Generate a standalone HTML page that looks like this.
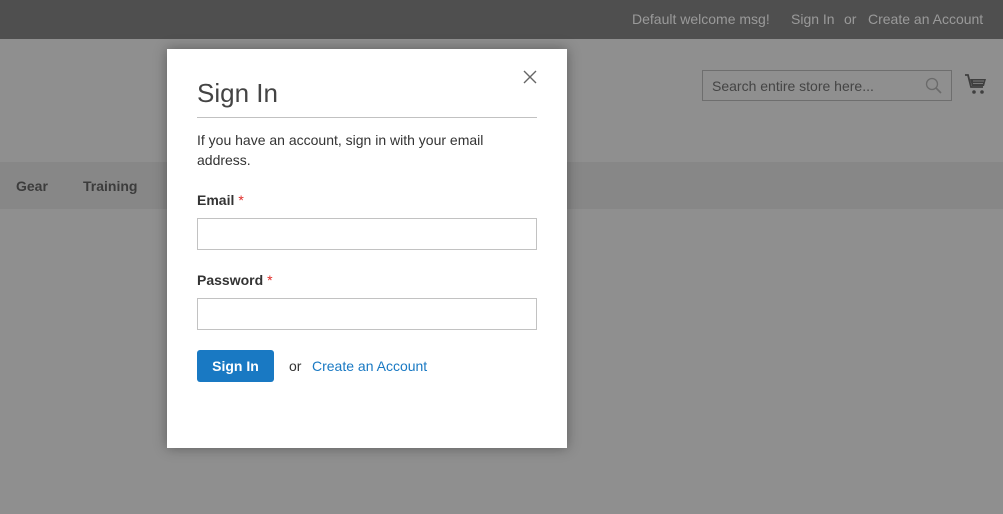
<!DOCTYPE html>
<html><head><style>
*{margin:0;padding:0;box-sizing:border-box}
body{width:1003px;height:514px;overflow:hidden;background:#8f8f8f;font-family:"Liberation Sans",sans-serif;position:relative}
.top{position:absolute;left:0;top:0;width:1003px;height:39px;background:#4f4f4f;color:#9a9a9a;font-size:14px}
.top span{position:absolute;top:11px}
.nav{position:absolute;left:0;top:162px;width:1003px;height:47px;background:#878787}
.nav span{position:absolute;top:16px;font-weight:bold;font-size:14px;color:#3c3c3c}
.search{position:absolute;left:702px;top:70px;width:250px;height:31px;border:1px solid #6e6e6e;background:#8f8f8f;font-size:14px;color:#444;padding:7px 9px}
.modal{position:absolute;left:167px;top:49px;width:400px;height:399px;background:#fff;box-shadow:0 0 12px rgba(0,0,0,.35);color:#333}
.modal h1{position:absolute;left:30px;top:29px;font-weight:normal;font-size:26px;color:#444}
.hr{position:absolute;left:30px;top:68px;width:340px;height:1px;background:#c1c1c1}
.p{position:absolute;left:30px;top:81px;width:330px;font-size:14px;line-height:20px}
.lbl{position:absolute;left:30px;font-weight:bold;font-size:14px}
.lbl b{color:#e02b27;font-weight:normal;margin-left:4px}
.in{position:absolute;left:30px;width:340px;height:32px;border:1px solid #c2c2c2}
.btn{position:absolute;left:30px;top:301px;width:77px;height:32px;background:#1979c3;border-radius:3px;color:#fff;font-weight:bold;font-size:14px;text-align:center;line-height:32px}
</style></head><body>
<div class="top"><span style="left:632px">Default welcome msg!</span><span style="left:791px">Sign In</span><span style="left:844px">or</span><span style="left:868px">Create an Account</span></div>
<div class="search">Search entire store here...</div>
<svg style="position:absolute;left:925px;top:77px" width="18" height="18" viewBox="0 0 18 18"><circle cx="7" cy="7" r="5.5" fill="none" stroke="#6a6a6a" stroke-width="1.3"/><path d="M11 11l5 5" stroke="#6a6a6a" stroke-width="1.6"/></svg>
<svg style="position:absolute;left:964px;top:73px" width="24" height="24" viewBox="0 0 24 24"><path d="M1 2h3l3 12h12" fill="none" stroke="#3f3f3f" stroke-width="1.8"/><path d="M6 6h16l-2 7H8z" fill="#3f3f3f"/><path d="M9 8h11M9 10.5h10" stroke="#8f8f8f" stroke-width=".8"/><circle cx="10" cy="19" r="1.8" fill="#3f3f3f"/><circle cx="18" cy="19" r="1.8" fill="#3f3f3f"/></svg>
<div class="nav"><span style="left:16px">Gear</span><span style="left:83px">Training</span></div>
<div class="modal">
<svg style="position:absolute;left:356px;top:21px" width="14" height="14" viewBox="0 0 14 14"><path d="M1 1l12 12M13 1L1 13" stroke="#666" stroke-width="1.4"/></svg>
<h1>Sign In</h1><div class="hr"></div>
<div class="p">If you have an account, sign in with your email address.</div>
<div class="lbl" style="top:143px">Email<b>*</b></div>
<div class="in" style="top:169px"></div>
<div class="lbl" style="top:223px">Password<b>*</b></div>
<div class="in" style="top:249px"></div>
<div class="btn">Sign In</div>
<div style="position:absolute;left:122px;top:309px;font-size:14px">or</div>
<div style="position:absolute;left:145px;top:309px;font-size:14px;color:#1979c3">Create an Account</div>
</div>
</body></html>
